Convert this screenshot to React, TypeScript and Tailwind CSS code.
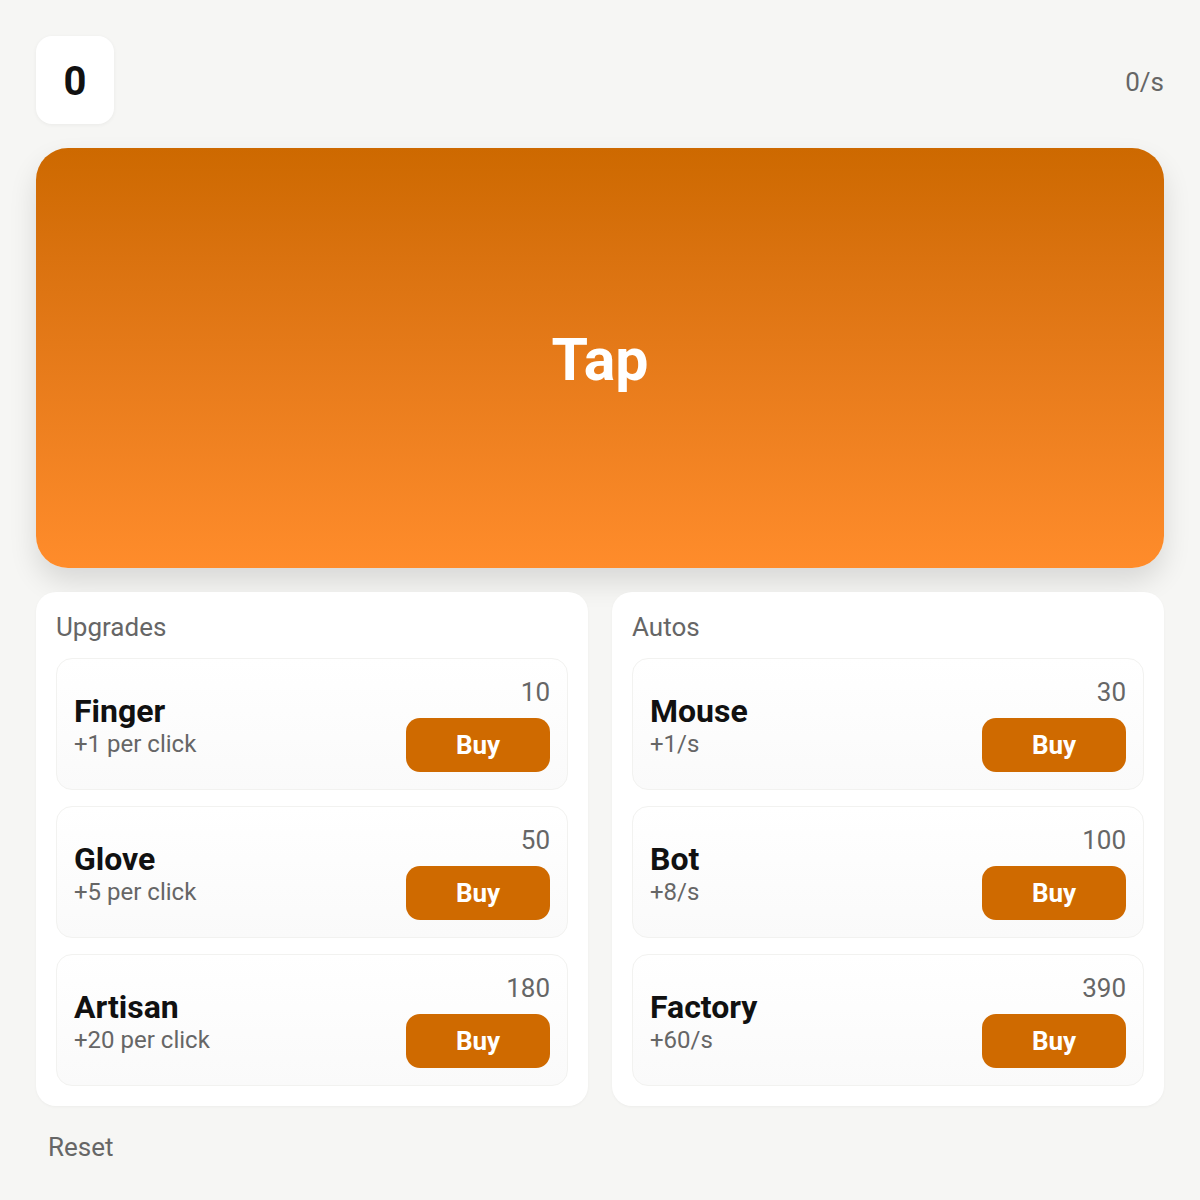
import * as React from 'react';

type Item = { name: string; effect: string; cost: number };

const UPGRADES: Item[] = [
  { name: 'Finger', effect: '+1 per click', cost: 10 },
  { name: 'Glove', effect: '+5 per click', cost: 50 },
  { name: 'Artisan', effect: '+20 per click', cost: 180 },
];

const AUTOS: Item[] = [
  { name: 'Mouse', effect: '+1/s', cost: 30 },
  { name: 'Bot', effect: '+8/s', cost: 100 },
  { name: 'Factory', effect: '+60/s', cost: 390 },
];

function ShopRow({ item }: { item: Item }) {
  return (
    <li className="flex h-[132px] items-center justify-between rounded-2xl border border-[#f2f2f0] bg-gradient-to-b from-white to-[#fafafa] px-[17px]">
      <div className="flex flex-col pt-1">
        <span className="text-[32px] font-bold leading-[36px] text-[#111]">{item.name}</span>
        <span className="text-[24px] leading-[30px] text-[#666]">{item.effect}</span>
      </div>
      <div className="flex flex-col items-end gap-[10px]">
        <span className="text-[26px] leading-8 text-[#666]">{item.cost}</span>
        <button className="flex h-[54px] w-[144px] items-center justify-center rounded-[14px] bg-[#cf6a00] text-[26px] font-bold text-white">
          Buy
        </button>
      </div>
    </li>
  );
}

function ShopPanel({ title, items }: { title: string; items: Item[] }) {
  return (
    <section className="flex flex-col gap-4 rounded-[20px] bg-white px-5 pb-5 pt-5 shadow-[0_1px_3px_rgba(0,0,0,0.04)]">
      <h2 className="text-[26px] leading-[30px] text-[#666]">{title}</h2>
      <ul className="flex flex-col gap-4">
        {items.map((it) => (
          <ShopRow key={it.name} item={it} />
        ))}
      </ul>
    </section>
  );
}

export default function App() {
  const [score, setScore] = React.useState(0);

  return (
    <div className="min-h-[1200px] bg-[#f6f6f4] px-9 pt-9 font-['Roboto',sans-serif]">
      <div className="flex items-center justify-between">
        <div className="flex h-[88px] w-[78px] items-center justify-center rounded-2xl bg-white pt-1 text-[40px] font-bold leading-10 text-[#111] shadow-[0_1px_4px_rgba(0,0,0,0.05)]">
          {score}
        </div>
        <span className="pt-1 text-[26px] text-[#666]">0/s</span>
      </div>

      <button
        onClick={() => setScore((s) => s)}
        className="mt-6 flex h-[420px] w-full items-center justify-center rounded-[32px] bg-gradient-to-b from-[#cd6900] to-[#ff8c2b] pt-1 text-[59px] font-bold text-white shadow-[0_14px_28px_rgba(0,0,0,0.12)]"
      >
        Tap
      </button>

      <div className="mt-6 grid grid-cols-2 gap-6">
        <ShopPanel title="Upgrades" items={UPGRADES} />
        <ShopPanel title="Autos" items={AUTOS} />
      </div>

      <button className="mt-5 rounded-lg px-3 py-1.5 text-[26px] leading-[30px] text-[#666]">
        Reset
      </button>
    </div>
  );
}
